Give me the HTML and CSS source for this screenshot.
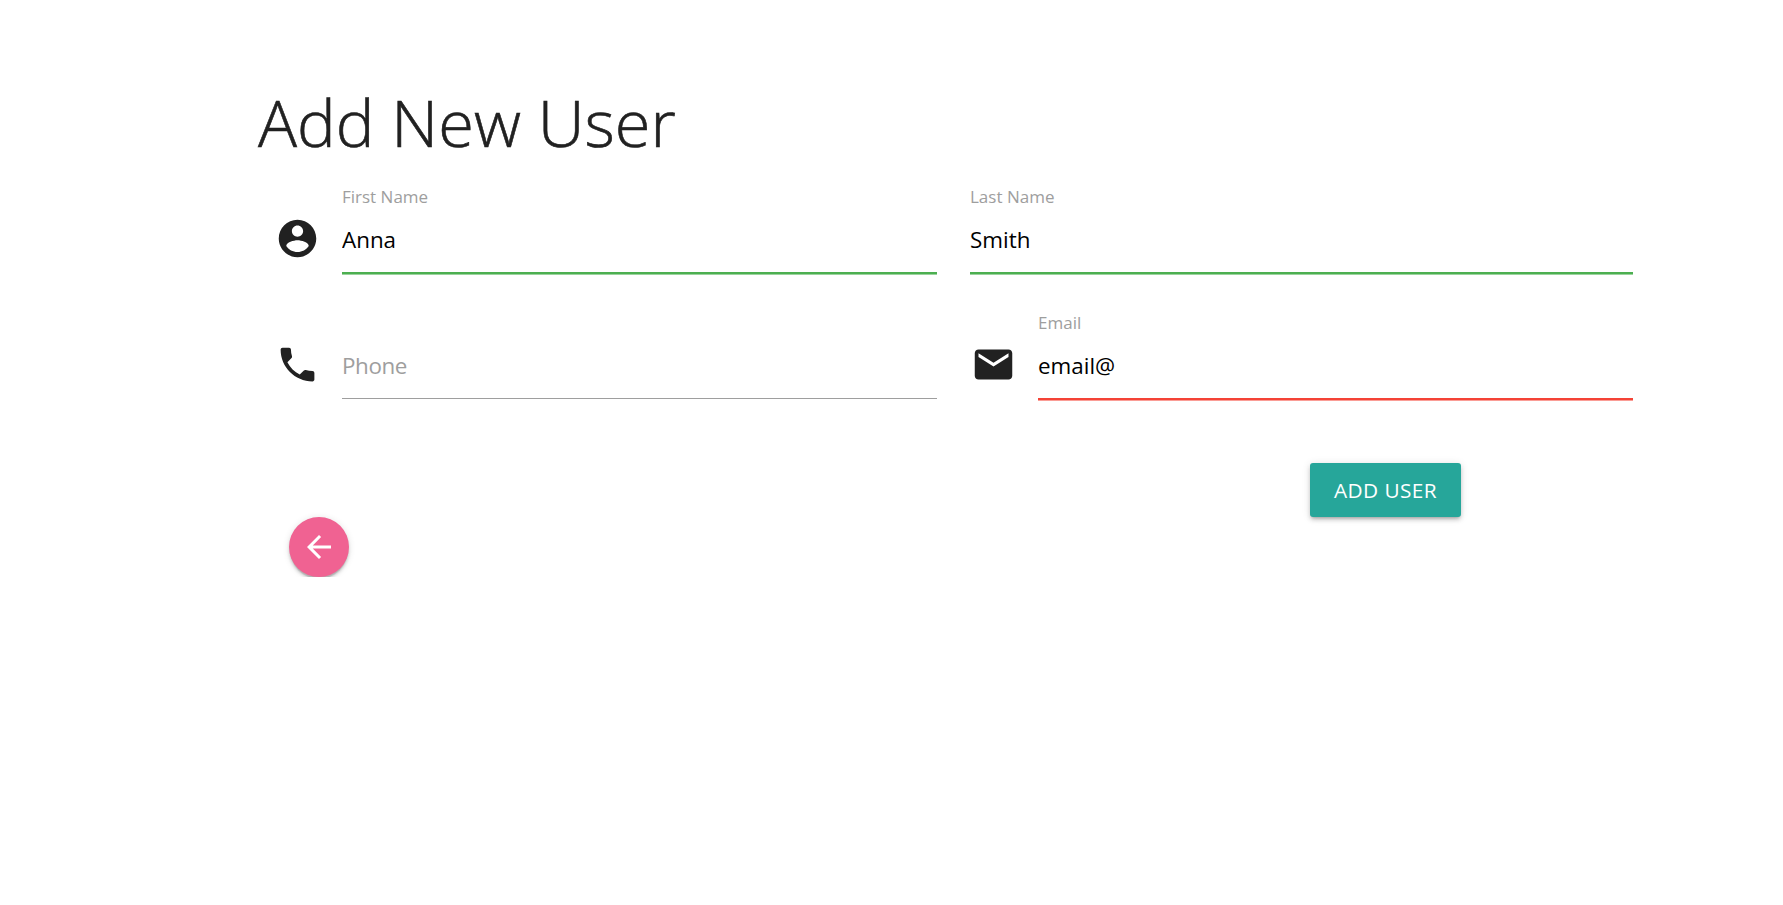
FILE: index.html
```html
<!DOCTYPE html>
<html lang="en">
<head>
<meta charset="utf-8">
<title>Add New User</title>
<link rel="stylesheet" href="styles.css">
</head>
<body>
<main class="page">
  <h1 class="title">Add New User</h1>
  <form class="form">
    <div class="row">
      <div class="cell">
        <svg class="icon" viewBox="0 0 24 24"><path d="M12 2C6.48 2 2 6.48 2 12s4.48 10 10 10 10-4.48 10-10S17.52 2 12 2zm0 3c1.66 0 3 1.34 3 3s-1.34 3-3 3-3-1.34-3-3 1.34-3 3-3zm0 14.2c-2.5 0-4.71-1.28-6-3.22.03-1.99 4-3.08 6-3.08 1.99 0 5.97 1.09 6 3.08-1.29 1.94-3.5 3.22-6 3.22z"/></svg>
        <div class="field valid"><label class="label" for="first">First Name</label><input class="input" id="first" type="text" value="Anna"></div>
      </div>
      <div class="cell">
        <div class="field valid"><label class="label" for="last">Last Name</label><input class="input" id="last" type="text" value="Smith"></div>
      </div>
    </div>
    <div class="row">
      <div class="cell">
        <svg class="icon" viewBox="0 0 24 24"><path d="M6.62 10.79c1.44 2.83 3.76 5.14 6.59 6.59l2.2-2.2c.27-.27.67-.36 1.02-.24 1.12.37 2.33.57 3.57.57.55 0 1 .45 1 1V20c0 .55-.45 1-1 1-9.39 0-17-7.61-17-17 0-.55.45-1 1-1h3.5c.55 0 1 .45 1 1 0 1.25.2 2.45.57 3.57.11.35.03.74-.25 1.02l-2.2 2.2z"/></svg>
        <div class="field"><span class="label"></span><input class="input" type="text" placeholder="Phone" aria-label="Phone"></div>
      </div>
      <div class="cell">
        <svg class="icon" viewBox="0 0 24 24"><path d="M20 4H4c-1.1 0-1.99.9-1.99 2L2 18c0 1.1.9 2 2 2h16c1.1 0 2-.9 2-2V6c0-1.1-.9-2-2-2zm0 4l-8 5-8-5V6l8 5 8-5v2z"/></svg>
        <div class="field invalid"><label class="label" for="email">Email</label><input class="input" id="email" type="text" value="email@"></div>
      </div>
    </div>
    <div class="actions">
      <button class="submit" type="button">ADD USER</button>
    </div>
  </form>
  <button class="fab" type="button" aria-label="Back">
    <svg class="fab-icon" viewBox="0 0 24 24"><path d="M20 11H7.83l5.59-5.59L12 4l-8 8 8 8 1.41-1.41L7.83 13H20v-2z"/></svg>
  </button>
</main>
</body>
</html>
```

FILE: styles.css
```css
* { box-sizing: border-box; }

html, body {
  margin: 0;
  background: #fff;
}

body {
  font-family: "Open Sans", "Noto Sans", sans-serif;
  color: #212121;
}

.page {
  padding: 78px 150px 0 258px;
}

.title {
  margin: 0;
  font-size: 65px;
  font-weight: 300;
  line-height: 89px;
  height: 108px;
  -webkit-text-stroke: 0.6px #212121;
  color: #212121;
}

.form {
  padding-left: 16px;
}

.row {
  display: flex;
  gap: 33px;
  margin-bottom: 38px;
}

.cell {
  display: flex;
  gap: 22px;
  width: 663px;
  align-items: flex-start;
}

.icon {
  flex: none;
  width: 45px;
  height: 45px;
  margin: 30px 0 0 1px;
  fill: #212121;
}

.field {
  flex: 1;
  display: flex;
  flex-direction: column;
  height: 88px;
}

.label {
  display: block;
  height: 28px;
  font-size: 17px;
  line-height: 22px;
  color: #9e9e9e;
}

.input {
  display: block;
  width: 100%;
  height: 58px;
  padding: 0 0 7px;
  border: 0;
  box-shadow: 0 1px 0 #9e9e9e;
  outline: 0;
  background: transparent;
  font: inherit;
  font-size: 22.4px;
  color: #000;
}

.input::placeholder {
  color: #9e9e9e;
  opacity: 1;
  letter-spacing: -0.4px;
}

.valid .input {
  box-shadow: 0 2px 0 #4caf50, 0 3px 0 #9bd39e;
}

.invalid .input {
  box-shadow: 0 2px 0 #f44336, 0 3px 0 #fa9d96;
}

.actions {
  display: flex;
  justify-content: flex-end;
  margin-top: 63px;
  padding-right: 172px;
}

.submit {
  width: 151px;
  height: 54px;
  border: 0;
  border-radius: 3px;
  background: #26a69a;
  color: #fff;
  font: inherit;
  font-size: 20.8px;
  letter-spacing: 0.4px;
  box-shadow: 0 3px 3px -2px rgba(0,0,0,.2), 0 3px 4px 0 rgba(0,0,0,.14), 0 1px 8px 0 rgba(0,0,0,.12);
}

.fab {
  display: flex;
  align-items: center;
  justify-content: center;
  width: 60px;
  height: 60px;
  margin-left: 31px;
  padding: 0;
  border: 0;
  border-radius: 50%;
  background: #f06292;
  box-shadow: 0 3px 3px 0 rgba(0,0,0,.14), 0 1px 7px 0 rgba(0,0,0,.12), 0 3px 1px -1px rgba(0,0,0,.14);
}

.fab-icon {
  width: 36px;
  height: 36px;
  fill: #fff;
}
```
